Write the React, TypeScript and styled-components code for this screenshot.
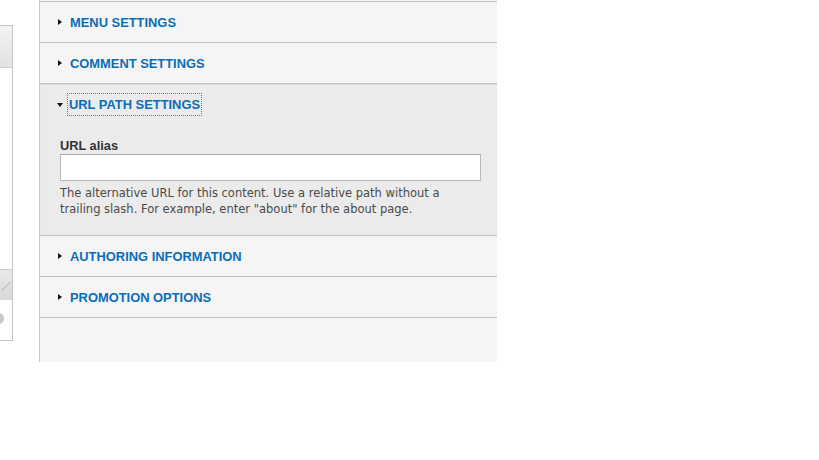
import { useState } from 'react';
import styled, { createGlobalStyle } from 'styled-components';

const GlobalStyle = createGlobalStyle`
  html, body {
    margin: 0;
    padding: 0;
    background: #ffffff;
  }
  body {
    font-family: "Liberation Sans", Arial, sans-serif;
  }
`;

interface SectionType {
  id: string;
  title: string;
}

const sections: SectionType[] = [
  { id: 'menu', title: 'MENU SETTINGS' },
  { id: 'comment', title: 'COMMENT SETTINGS' },
  { id: 'path', title: 'URL PATH SETTINGS' },
  { id: 'author', title: 'AUTHORING INFORMATION' },
  { id: 'promote', title: 'PROMOTION OPTIONS' },
];

export default function App() {
  const [openSection, setOpenSection] = useState('path');
  const [alias, setAlias] = useState('');

  const onToggle = (id: string) => {
    setOpenSection((prev) => (prev === id ? '' : id));
  };

  return (
    <>
      <GlobalStyle />
      <Page>
        <EditorStub>
          <EditorHeader />
          <EditorBody />
          <EditorToolbar>
            <ResizeGrip />
          </EditorToolbar>
          <EditorFooter>
            <HelpDot />
          </EditorFooter>
        </EditorStub>

        <Sidebar>
          {sections.map(({ id, title }) => {
            const isOpen = openSection === id;
            return (
              <Section key={id} $open={isOpen}>
                <Summary onClick={() => onToggle(id)}>
                  <Arrow $open={isOpen} />
                  <SummaryText $focused={isOpen}>{title}</SummaryText>
                </Summary>
                {isOpen && id === 'path' && (
                  <SectionBody>
                    <FieldLabel htmlFor="url-alias">URL alias</FieldLabel>
                    <TextInput
                      id="url-alias"
                      type="text"
                      value={alias}
                      onChange={(e) => setAlias(e.target.value)}
                    />
                    <Description>
                      The alternative URL for this content. Use a relative path without a
                      <br />
                      trailing slash. For example, enter "about" for the about page.
                    </Description>
                  </SectionBody>
                )}
              </Section>
            );
          })}
        </Sidebar>
      </Page>
    </>
  );
}

const Page = styled.div`
  display: flex;
  align-items: flex-start;
  gap: 26px;
  width: 819px;
  height: 460px;
  background: #ffffff;
`;

const EditorStub = styled.div`
  display: flex;
  flex-direction: column;
  width: 12px;
  height: 314px;
  margin-top: 25px;
  border: 1px solid #c4c4c4;
  border-left: none;
  background: #ffffff;
  overflow: hidden;
`;

const EditorHeader = styled.div`
  height: 41px;
  border-bottom: 1px solid #cfcfcf;
  background: linear-gradient(#f3f3f3, #e2e2e2);
`;

const EditorBody = styled.div`
  height: 201px;
  background: #ffffff;
`;

const EditorToolbar = styled.div`
  position: relative;
  height: 29px;
  border-top: 1px solid #cccccc;
  border-bottom: 1px solid #d8d8d8;
  background: linear-gradient(#e9e9e9, #d9d9d9);
`;

const ResizeGrip = styled.div`
  position: absolute;
  left: 2px;
  top: 20px;
  width: 12px;
  height: 1px;
  background: #b5b5b5;
  transform: rotate(-45deg);
  transform-origin: left center;
`;

const EditorFooter = styled.div`
  flex: 1;
  display: flex;
  align-items: flex-start;
  padding-top: 13px;
`;

const HelpDot = styled.div`
  width: 11px;
  height: 11px;
  margin-left: -7px;
  border-radius: 50%;
  background: #c9c9c9;
`;

const Sidebar = styled.div`
  display: flex;
  flex-direction: column;
  width: 458px;
  height: 362px;
  padding-top: 1px;
  box-sizing: border-box;
  border-left: 1px solid #c8c8c8;
  background: #f5f5f5;
`;

const Section = styled.div<{ $open: boolean }>`
  display: flex;
  flex-direction: column;
  border-top: 1px solid #c2c2c2;
  background: ${({ $open }) => ($open ? '#ebebeb' : '#f5f5f5')};
  box-shadow: ${({ $open }) =>
    $open ? 'inset 0 1px 1px rgba(0, 0, 0, 0.08)' : 'none'};
  &:last-child {
    border-bottom: 1px solid #c2c2c2;
  }
`;

const Summary = styled.div`
  display: flex;
  align-items: center;
  height: 40px;
  padding-left: 17px;
  cursor: pointer;
`;

const Arrow = styled.span<{ $open: boolean }>`
  display: inline-block;
  width: 0;
  height: 0;
  border-style: solid;
  border-color: transparent;
  ${({ $open }) =>
    $open
      ? `
    margin-right: 5px;
    margin-top: 1px;
    border-width: 4px 3.5px 0 3.5px;
    border-top-color: #111111;
  `
      : `
    margin-left: 1px;
    margin-right: 7px;
    border-width: 3.5px 0 3.5px 4px;
    border-left-color: #111111;
  `}
`;

const SummaryText = styled.span<{ $focused: boolean }>`
  padding: 3px 1px;
  font-size: 12.9px;
  font-weight: 700;
  line-height: 15px;
  color: #0b6db7;
  outline: ${({ $focused }) => ($focused ? '1px dotted #3f7fc0' : 'none')};
`;

const SectionBody = styled.div`
  display: flex;
  flex-direction: column;
  padding: 14px 16px 18px 20px;
`;

const FieldLabel = styled.label`
  font-size: 12.8px;
  font-weight: 700;
  line-height: 16px;
  color: #333333;
`;

const TextInput = styled.input`
  width: 421px;
  height: 27px;
  box-sizing: border-box;
  margin: 0;
  padding: 3px 6px;
  border: 1px solid #b8b8b8;
  border-top-color: #a8a8a8;
  border-radius: 0;
  background: #ffffff;
  font-family: "DejaVu Sans", sans-serif;
  font-size: 12px;
  outline: none;
`;

const Description = styled.div`
  margin-top: 4px;
  font-family: "DejaVu Sans", Verdana, sans-serif;
  font-size: 11.5px;
  line-height: 16px;
  color: #4a4a4a;
`;
